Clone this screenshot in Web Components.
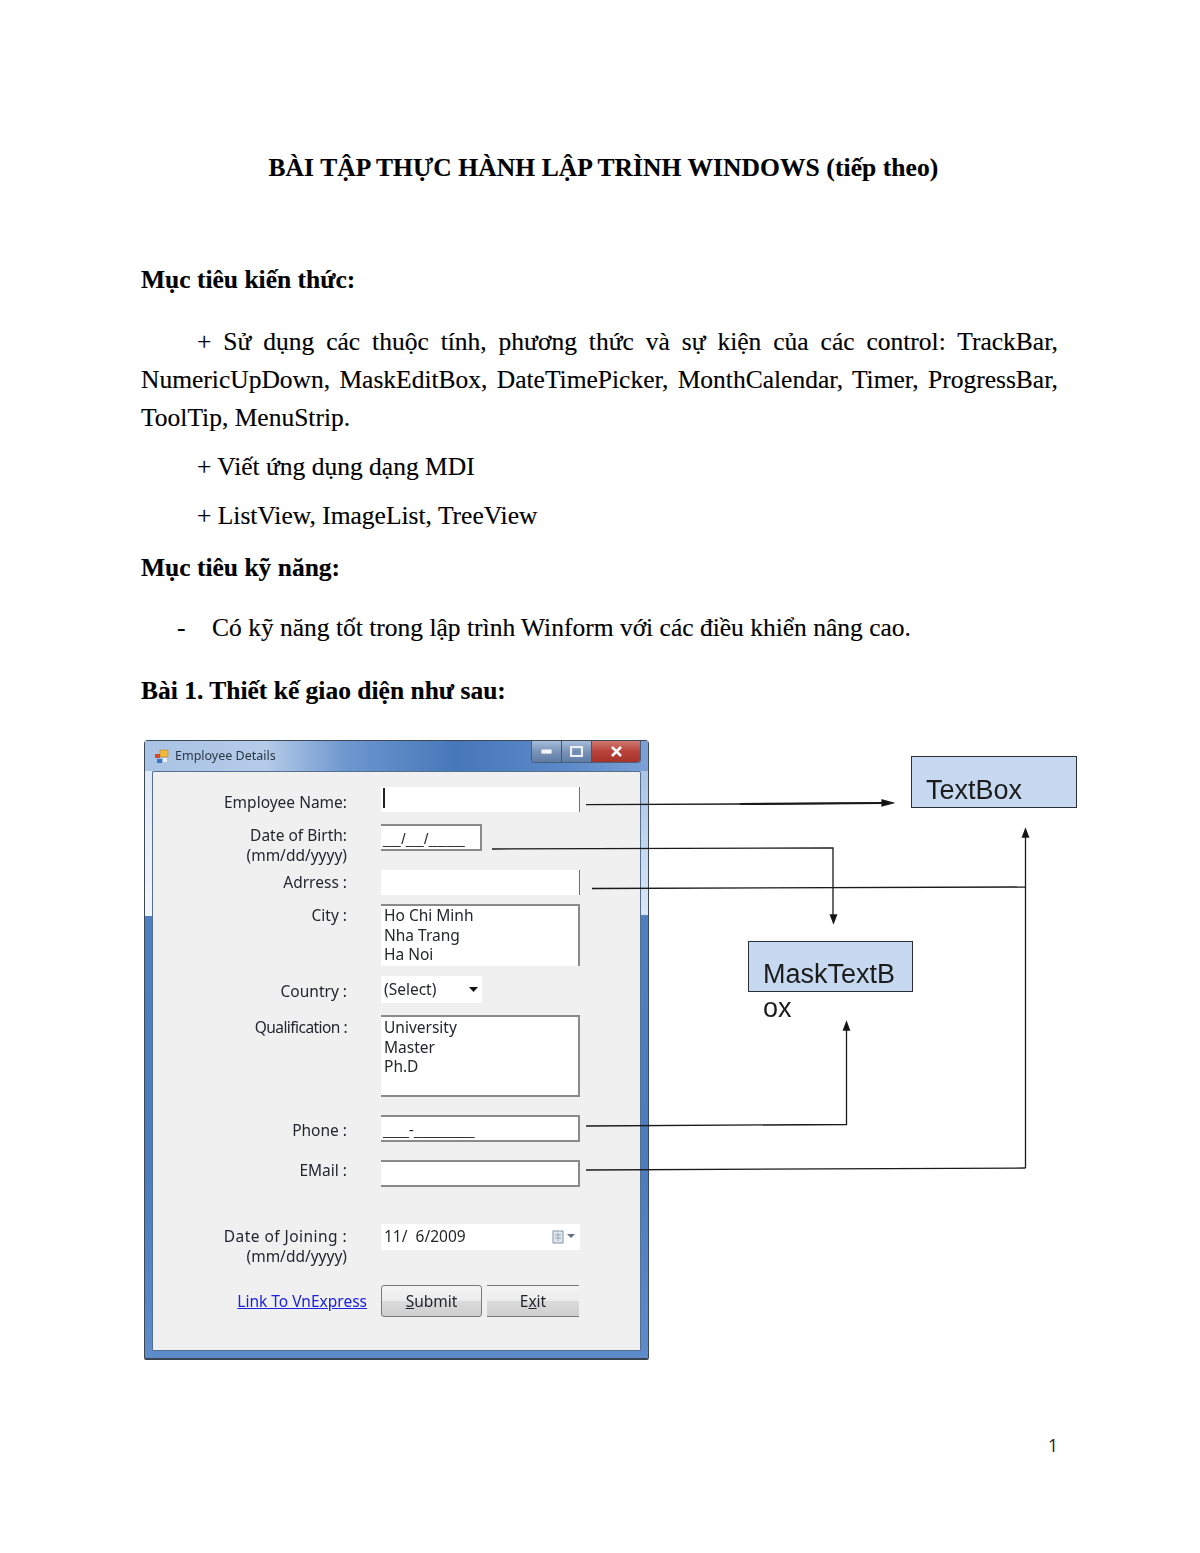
<!DOCTYPE html>
<html lang="vi">
<head>
<meta charset="utf-8">
<title>Bài tập thực hành lập trình Windows</title>
<style>
  html, body { margin: 0; background: #fff; }
  body { font-family: "Liberation Serif", "Times New Roman", serif; color: #000; }
</style>
</head>
<body>
<doc-page>
  <doc-p kind="title" gap="0">BÀI TẬP THỰC HÀNH LẬP TRÌNH WINDOWS (tiếp theo)</doc-p>
  <doc-p kind="heading" gap="74">Mục tiêu kiến thức:</doc-p>
  <doc-p kind="first" gap="24">+ Sử dụng các thuộc tính, phương thức và sự kiện của các control: TrackBar, NumericUpDown, MaskEditBox, DateTimePicker, MonthCalendar, Timer, ProgressBar, ToolTip, MenuStrip.</doc-p>
  <doc-p kind="first" gap="11">+ Viết ứng dụng dạng MDI</doc-p>
  <doc-p kind="first" gap="11">+ ListView, ImageList, TreeView</doc-p>
  <doc-p kind="heading" gap="14">Mục tiêu kỹ năng:</doc-p>
  <doc-p kind="bullet" gap="22">Có kỹ năng tốt trong lập trình Winform với các điều khiển nâng cao.</doc-p>
  <doc-p kind="heading" gap="25">Bài 1. Thiết kế giao diện như sau:</doc-p>

  <doc-figure>
    <win-window caption="Employee Details">
      <win-row label="Employee Name:" h="25" top="15" lab="5"><win-field kind="open" caret></win-field></win-row>
      <win-row label="Date of Birth:<br>(mm/dd/yyyy)" h="27" top="12" lab="1"><win-field kind="box" w="101" spaced>__/__/____</win-field></win-row>
      <win-row label="Adrress :" h="25" top="19" lab="2"><win-field kind="open"></win-field></win-row>
      <win-row label="City :" h="62" top="9" lab="1"><win-field kind="list">Ho Chi Minh<br>Nha Trang<br>Ha Noi</win-field></win-row>
      <win-row label="Country :" h="27" top="10" lab="5"><win-field kind="combo" w="101">(Select)</win-field></win-row>
      <win-row label="<span style='letter-spacing:-.55px'>Qualification :</span>" h="82" top="12" lab="2"><win-field kind="listbox">University<br>Master<br>Ph.D</win-field></win-row>
      <win-row label="Phone :" h="27" top="18" lab="5"><win-field kind="box">___-_______</win-field></win-row>
      <win-row label="EMail :" h="27" top="18" lab="0"><win-field kind="box"></win-field></win-row>
      <win-row label="<span style='letter-spacing:.45px'>Date of Joining :</span><br>(mm/dd/yyyy)" h="26" top="37" lab="2"><win-field kind="date">11/&nbsp; 6/2009</win-field></win-row>
      <win-row label="<a>Link To VnExpress</a>" h="32" top="35" lab="6" nudge="20">
        <win-button><u>S</u>ubmit</win-button>
        <win-button open w="92">E<u>x</u>it</win-button>
      </win-row>
    </win-window>
    <diagram-node x="767" y="16" w="166" h="52" pad="16">TextBox</diagram-node>
    <diagram-node x="604" y="201" w="165" h="51" pad="15">MaskTextBox</diagram-node>
  </doc-figure>

  <doc-pagenum>1</doc-pagenum>
</doc-page>

<script>
class DocPage extends HTMLElement {
  connectedCallback() {
    this.attachShadow({ mode: 'open' });
    this.shadowRoot.innerHTML = `
      <style>
        :host {
          display: flex;
          flex-direction: column;
          box-sizing: border-box;
          width: 1200px;
          height: 1553px;
          padding: 149px 142px 0 141px;
          overflow: hidden;
          background: #fff;
        }
      </style>
      <slot></slot>
    `;
  }
}

class DocP extends HTMLElement {
  connectedCallback() {
    this.attachShadow({ mode: 'open' });
    this.style.marginTop = (this.getAttribute('gap') || 0) + 'px';
    const bullet = this.getAttribute('kind') === 'bullet';
    this.shadowRoot.innerHTML = `
      <style>
        :host {
          display: block;
          font: 25.5px/38px "Liberation Serif", "Times New Roman", serif;
          color: #000;
          -webkit-text-stroke: .15px #000;
        }
        :host([kind="title"]) { font-weight: 700; text-align: center; padding-left: 8px; letter-spacing: .085px; }
        :host([kind="heading"]) { font-weight: 700; }
        :host([kind="first"]) { text-align: justify; text-indent: 56px; }
        :host([kind="bullet"]) { display: flex; padding-left: 36px; }
        .dash { width: 35px; flex: none; }
      </style>
      ${bullet ? '<span class="dash">-</span>' : ''}<span><slot></slot></span>
    `;
  }
}

class DocFigure extends HTMLElement {
  connectedCallback() {
    this.attachShadow({ mode: 'open' });
    this.shadowRoot.innerHTML = `
      <style>
        :host {
          display: block;
          position: relative;
          width: 917px;
          height: 620px;
          margin: 30px 0 0 3px;
        }
        svg { position: absolute; left: 0; top: 0; overflow: visible; filter: blur(.3px); }
      </style>
      <slot></slot>
      <svg width="960" height="640" viewBox="144 740 960 640" fill="none" stroke="#1a1a1a" stroke-width="1.3">
        <path d="M586 804.6 L740 804 L884 803" />
        <path d="M740 804 L884 803" stroke-width="2.2" />
        <path d="M882 800 L893 803 L882 806 Z" fill="#111" />
        <path d="M492 849 L833 848 L833 915" />
        <path d="M830.5 915 L833.500 923 L836.5 915 Z" fill="#111" />
        <path d="M592 888.500 L1025.500 887 M1025.500 1168 L1025.500 836" />
        <path d="M1022.500 837 L1025.500 829 L1028.500 837 Z" fill="#111" />
        <path d="M586 1126 L846.500 1124.500 L846.500 1029" />
        <path d="M843.500 1030 L846.500 1022 L849.500 1030 Z" fill="#111" />
        <path d="M586 1170 L1025.500 1168" />
      </svg>
    `;
  }
}

class DiagramNode extends HTMLElement {
  connectedCallback() {
    this.attachShadow({ mode: 'open' });
    const a = n => this.getAttribute(n);
    this.style.left = a('x') + 'px';
    this.style.top = a('y') + 'px';
    this.style.width = a('w') + 'px';
    this.style.height = a('h') + 'px';
    this.shadowRoot.innerHTML = `
      <style>
        :host {
          display: block;
          position: absolute;
          box-sizing: border-box;
          background: #c6d9f0;
          border: 1.4px solid #2c2f33;
          padding: ${a('pad')}px 10px 0 14px;
          font: 27px/34px "Liberation Sans", Arial, sans-serif;
          color: #1c1c1c;
          word-break: break-all;
          filter: blur(.25px);
        }
      </style>
      <slot></slot>
    `;
  }
}

class WinWindow extends HTMLElement {
  connectedCallback() {
    this.attachShadow({ mode: 'open' });
    this.shadowRoot.innerHTML = `
      <style>
        :host {
          display: flex;
          flex-direction: column;
          box-sizing: border-box;
          width: 505px;
          height: 620px;
          padding: 0 7px 7px 7px;
          border: 1px solid #3d4855;
          border-bottom: 2px solid #3a4550;
          border-radius: 4px 4px 2px 2px;
          background:
            linear-gradient(#dfe8f5, #f2f5fb) 0 30px / 7px 145px no-repeat,
            linear-gradient(to bottom, #9fbce3 0, #dbe7f6 27.900%, #dde8f6 28.100%, #4f7fc3 28.300%, #4a7cc2 70%, #5e8ccb 100%);
          filter: blur(.55px);
        }
        .bar {
          display: flex;
          align-items: flex-start;
          flex: none;
          height: 30px;
          margin: 0 -7px;
          padding: 0 7px 0 9px;
          background: linear-gradient(to right, #a9c3e4 0, #b5cbe8 24%, #6d97cf 40%, #4677b9 62%, #5e8bc9 85%, #7ba1d6 100%);
        }
        .icon { width: 15px; height: 15px; margin: 8px 6px 0 0; flex: none; }
        .caption {
          font: 12.500px/16px "Noto Sans", sans-serif;
          color: #2a3646;
          margin-top: 7px;
          flex: 1;
        }
        .ctl {
          display: flex;
          flex: none;
          height: 21px;
          border: 1px solid #4b5e78;
          border-top: 0;
          border-radius: 0 0 4px 4px;
          overflow: hidden;
        }
        .ctl span { display: flex; align-items: center; justify-content: center; height: 100%; }
        .min, .max { width: 29px; background: linear-gradient(#a7bcd8, #7b94b8 50%, #5e7ca6); border-right: 1px solid #44566f; }
        .close { width: 48px; background: linear-gradient(#cf7a70, #b8423a 50%, #a5342c); }
        .client {
          flex: 1;
          display: flex;
          flex-direction: column;
          padding-left: 0;
          background: #f0f0f0;
          border: 1px solid #55708f;
          border-radius: 2px 2px 0 0;
        }
      </style>
      <div class="bar">
        <svg class="icon" viewBox="0 0 15 15">
          <rect x="6" y="1" width="8" height="7" fill="#f1b93a" stroke="#b5842a" stroke-width=".6" />
          <rect x="1" y="5" width="5" height="4" fill="#d5452f" />
          <rect x="3" y="10" width="5" height="4" fill="#3c73c4" />
          <rect x="9" y="9" width="4" height="4" fill="#e9eef6" />
        </svg>
        <span class="caption">${this.getAttribute('caption')}</span>
        <div class="ctl">
          <span class="min"><svg width="11" height="5" viewBox="0 0 11 5"><rect x="0" y="0" width="11" height="5" fill="#f2f5fa" stroke="#4a5d78" stroke-width=".5" /></svg></span>
          <span class="max"><svg width="13" height="11" viewBox="0 0 13 11"><rect x="1" y="1" width="11" height="9" fill="none" stroke="#eef2f8" stroke-width="2" /><rect x="4" y="4" width="5" height="3" fill="#6f88ad" /></svg></span>
          <span class="close"><svg width="13" height="11" viewBox="0 0 13 11"><path d="M2 1 L11 10 M11 1 L2 10" stroke="#fff" stroke-width="2.600" /></svg></span>
        </div>
      </div>
      <div class="client"><slot></slot></div>
    `;
  }
}

class WinRow extends HTMLElement {
  connectedCallback() {
    this.attachShadow({ mode: 'open' });
    const a = n => this.getAttribute(n);
    this.style.height = a('h') + 'px';
    this.style.marginTop = a('top') + 'px';
    this.shadowRoot.innerHTML = `
      <style>
        :host {
          display: flex;
          flex: none;
          gap: 34px;
          font: 15.500px/20px "Noto Sans", sans-serif;
          color: #23272d;
        }
        .label {
          flex: none;
          width: 194px;
          padding-top: ${a('lab')}px;
          text-align: right;
          white-space: nowrap;
          box-sizing: border-box;
        }
        .ctrls { display: flex; gap: 5px; width: 199px; flex: none; height: 100%; }
        a { color: #1a22e0; text-decoration: underline; position: relative; left: ${a('nudge') || 0}px; }
      </style>
      <div class="label">${a('label')}</div>
      <div class="ctrls"><slot></slot></div>
    `;
  }
}

class WinField extends HTMLElement {
  connectedCallback() {
    this.attachShadow({ mode: 'open' });
    const kind = this.getAttribute('kind');
    const w = this.getAttribute('w');
    this.style.width = (w || 199) + 'px';
    const caret = this.hasAttribute('caret') ? '<i class="caret"></i>' : '';
    const combo = kind === 'combo'
      ? '<svg class="end" width="9" height="5" viewBox="0 0 9 5"><path d="M0 0 H9 L4.500 5 Z" fill="#111" /></svg>' : '';
    const date = kind === 'date'
      ? `<svg class="end" width="24" height="14" viewBox="0 0 24 14">
           <rect x="1" y="1" width="10" height="12" fill="#dfe6ee" stroke="#8a95a3" />
           <path d="M3 5 H9 M3 8 H9 M6 3 V11" stroke="#9aa6b4" />
           <path d="M15 4 H23 L19 8 Z" fill="#5f6f82" />
         </svg>` : '';
    this.shadowRoot.innerHTML = `
      <style>
        :host {
          display: flex;
          align-items: center;
          justify-content: space-between;
          box-sizing: border-box;
          height: 100%;
          flex: none;
          background: #fff;
          padding: 0 1px 0 2px;
          font: 15.500px/19.500px "Noto Sans", sans-serif;
          color: #23272d;
          white-space: nowrap;
        }
        :host([kind="open"]) { border-right: 1px solid #6f6f6f; }
        :host([kind="box"]) {
          border: solid #8a8a8a;
          border-width: 2px 2px 2px 0;
          font-family: "Liberation Sans", sans-serif;
          padding-top: 2px;
        }
        :host([spaced]) { letter-spacing: .45px; }
        :host([kind="list"]), :host([kind="listbox"]) {
          align-items: flex-start;
          border: solid #8a8a8a;
          border-width: 2px 2px 0 0;
          padding-left: 3px;
        }
        :host([kind="listbox"]) { border-bottom-width: 2px; padding-top: 1px; }
        :host([kind="combo"]) { padding: 0 4px 0 3px; }
        :host([kind="date"]) { padding: 0 4px 0 3px; }
        .caret { display: block; width: 1.500px; height: 20px; background: #222; margin: 0 0 4px 0; }
        .end { flex: none; }
      </style>
      <span>${caret}<slot></slot></span>${combo}${date}
    `;
  }
}

class WinButton extends HTMLElement {
  connectedCallback() {
    this.attachShadow({ mode: 'open' });
    this.style.width = (this.getAttribute('w') || 101) + 'px';
    this.shadowRoot.innerHTML = `
      <style>
        :host {
          display: flex;
          align-items: center;
          justify-content: center;
          box-sizing: border-box;
          height: 100%;
          flex: none;
          border: 1.500px solid #7a7a7a;
          border-radius: 3px;
          background: linear-gradient(#f4f4f4 0, #ececec 48%, #dadada 52%, #cfcfcf 100%);
          font: 15.500px/20px "Noto Sans", sans-serif;
          color: #1f2328;
        }
        :host([open]) { border-left: 0; border-right: 0; border-radius: 0; }
      </style>
      <slot></slot>
    `;
  }
}

class DocPagenum extends HTMLElement {
  connectedCallback() {
    this.attachShadow({ mode: 'open' });
    this.shadowRoot.innerHTML = `
      <style>
        :host {
          display: block;
          margin-top: 75px;
          padding-right: 0;
          text-align: right;
          font: 17.500px/20px "Open Sans", sans-serif;
          color: #222;
        }
      </style>
      <slot></slot>
    `;
  }
}

customElements.define('doc-page', DocPage);
customElements.define('doc-p', DocP);
customElements.define('doc-figure', DocFigure);
customElements.define('diagram-node', DiagramNode);
customElements.define('win-window', WinWindow);
customElements.define('win-row', WinRow);
customElements.define('win-field', WinField);
customElements.define('win-button', WinButton);
customElements.define('doc-pagenum', DocPagenum);
</script>
</body>
</html>
